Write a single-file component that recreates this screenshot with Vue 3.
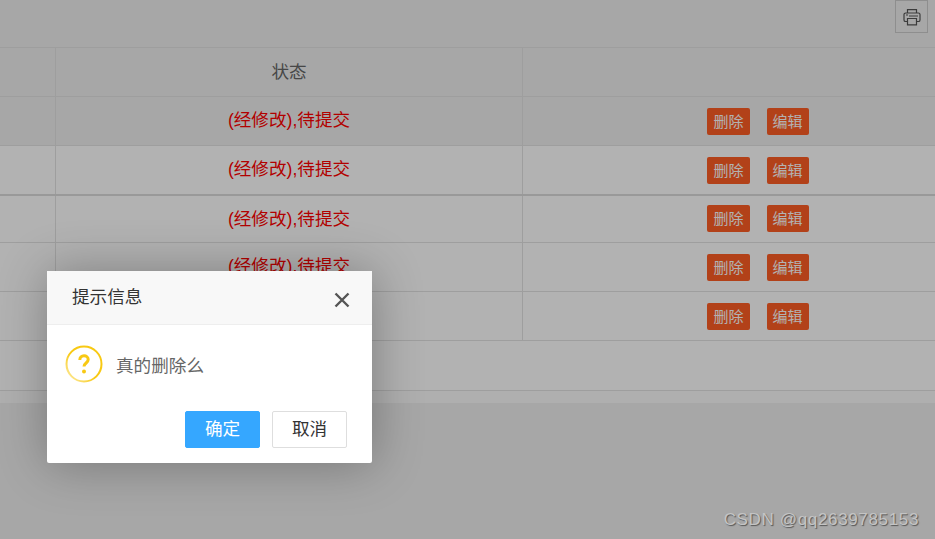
<script setup>
const rows = [
  { id: 1, hover: true },
  { id: 2 },
  { id: 3, thick: true },
  { id: 4 },
  { id: 5 },
]
</script>

<template>
  <div class="page">
    <div class="toolbar">
      <button class="print" aria-label="打印">
        <svg width="18" height="18" viewBox="0 0 18 18" fill="none" stroke="#555" stroke-width="1.2">
          <path d="M4.500 5V1.600h9V5" />
          <path d="M4.500 13.500H2.600A1.600 1.600 0 0 1 1 11.900V6.600A1.600 1.600 0 0 1 2.600 5h12.800A1.600 1.600 0 0 1 17 6.600v5.300a1.600 1.600 0 0 1-1.600 1.600h-1.900" />
          <path d="M4.500 10.500h9v6.400h-9z" />
          <path d="M6 8h9" stroke-width="1" />
          <path d="M3 7h2" stroke-width="1" />
        </svg>
      </button>
    </div>
    <div class="table">
      <div class="row head">
        <div class="cell first"></div>
        <div class="cell status">状态</div>
        <div class="cell ops"></div>
      </div>
      <div v-for="r in rows" :key="r.id" class="row" :class="{ hover: r.hover, thick: r.thick }">
        <div class="cell first"></div>
        <div class="cell status red">(经修改),待提交</div>
        <div class="cell ops">
          <span class="tag">删除</span>
          <span class="tag">编辑</span>
        </div>
      </div>
      <div class="row blank"></div>
      <div class="foot"></div>
    </div>

    <div class="mask"></div>

    <div class="dialog">
      <div class="dialog-head">
        <span>提示信息</span>
        <svg class="close" width="16" height="16" viewBox="0 0 16 16" stroke="#555" stroke-width="2.400" fill="none">
          <path d="M1.500 1.500l13 13M14.500 1.500l-13 13" />
        </svg>
      </div>
      <div class="dialog-body">
        <svg width="38" height="38" viewBox="0 0 38 38" fill="none">
          <defs>
            <linearGradient id="ring" x1="1" y1="0" x2="0" y2="1">
              <stop offset="0.55" stop-color="#f8c913" />
              <stop offset="1" stop-color="#fdeeb0" />
            </linearGradient>
          </defs>
          <circle cx="19" cy="19" r="17.500" stroke="url(#ring)" stroke-width="2" />
          <path d="M14.800 15c0-2.600 1.900-4.200 4.200-4.200s4.200 1.500 4.200 3.800c0 3.400-4.200 3.400-4.200 6.900" stroke="#f8c913" stroke-width="3" />
          <circle cx="19" cy="26.500" r="2" fill="#f8c913" />
        </svg>
        <span>真的删除么</span>
      </div>
      <div class="dialog-foot">
        <button class="btn primary">确定</button>
        <button class="btn">取消</button>
      </div>
    </div>

    <div class="mark">CSDN @qq2639785153</div>
  </div>
</template>

<style scoped>
.page {
  position: relative;
  width: 935px;
  height: 539px;
  overflow: hidden;
  background: #f0f0f0;
  font-family: "Liberation Sans", "Noto Sans CJK SC", sans-serif;
  font-size: 17.6px;
  color: #666;
}
.toolbar {
  height: 47px;
  display: flex;
  justify-content: flex-end;
  align-items: flex-start;
  padding-right: 3px;
  border-bottom: 1px solid #e2e2e2;
}
.print {
  width: 33px;
  height: 33px;
  padding: 0;
  margin-right: 4px;
  border: 1px solid #ccc;
  background: transparent;
  display: flex;
  align-items: center;
  justify-content: center;
  box-sizing: border-box;
}
.table {
  background: #fff;
}
.row {
  display: grid;
  grid-template-columns: 56px 467px 1fr;
  height: 49px;
  box-sizing: border-box;
  border-bottom: 1px solid #e2e2e2;
}
.row.head,
.row.hover {
  background: #f0f0f0;
}
.row.thick {
  border-top: 2px solid #dcdcdc;
  margin-top: -1px;
}
.row.blank {
  height: 50px;
}
.foot {
  height: 12px;
  background: #fbfbfb;
}
.cell {
  display: flex;
  align-items: center;
  justify-content: center;
  border-right: 1px solid #e2e2e2;
  padding-bottom: 3px;
  box-sizing: border-box;
}
.cell.ops {
  border-right: 0;
  gap: 17px;
  padding: 0 0 0 58px;
}
.row.thick .cell.ops {
  padding-bottom: 2px;
}
.cell.red {
  color: #ff0000;
  padding-bottom: 5px;
}
.row.thick .cell.red {
  padding-bottom: 4px;
}
.tag {
  height: 27px;
  min-width: 42px;
  padding: 0 6px;
  box-sizing: border-box;
  border-radius: 2px;
  background: #ff5e25;
  color: #fff;
  font-size: 15px;
  line-height: 27px;
  text-align: center;
}
.mask {
  position: absolute;
  inset: 0;
  background: rgba(0, 0, 0, 0.3);
}
.dialog {
  position: absolute;
  left: 47px;
  top: 271px;
  width: 325px;
  height: 192px;
  background: #fff;
  border-radius: 2px;
  box-shadow: 1px 1px 50px rgba(0, 0, 0, 0.3);
  display: flex;
  flex-direction: column;
}
.dialog-head {
  height: 54px;
  box-sizing: border-box;
  background: #f8f8f8;
  border-bottom: 1px solid #eee;
  padding: 0 22px 4px 25px;
  display: flex;
  align-items: center;
  justify-content: space-between;
  color: #333;
}
.close {
  margin-top: 8px;
}
.dialog-body {
  display: flex;
  align-items: center;
  gap: 13px;
  padding: 20px 0 0 18px;
  height: 38px;
}
.dialog-foot {
  display: flex;
  justify-content: flex-end;
  gap: 12px;
  padding: 28px 25px 0 0;
}
.btn {
  width: 75px;
  height: 37px;
  padding: 0 0 5px;
  box-sizing: border-box;
  border: 1px solid #dedede;
  border-radius: 2px;
  background: #fff;
  color: #333;
  font: inherit;
}
.btn.primary {
  border-color: #35a7ff;
  background: #35a7ff;
  color: #fff;
}
.mark {
  position: absolute;
  right: 16px;
  bottom: 9px;
  font-size: 17px;
  letter-spacing: 0.65px;
  color: #c4c4c4;
  text-shadow: 1px 1px 1px #555;
}
</style>
